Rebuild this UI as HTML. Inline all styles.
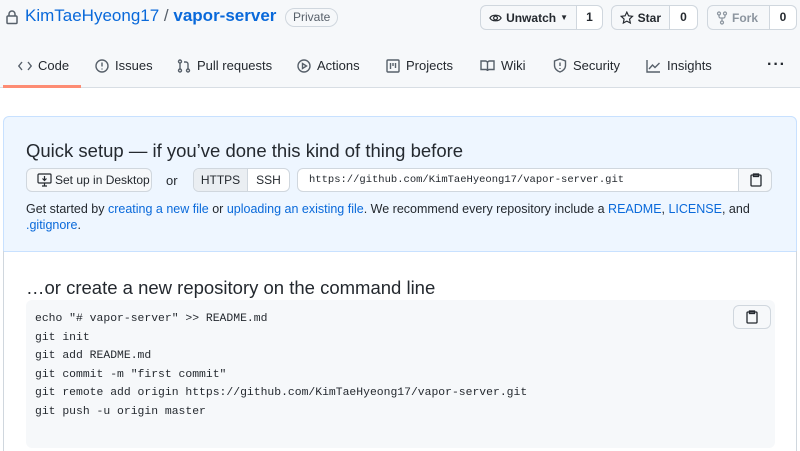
<!DOCTYPE html>
<html><head><meta charset="utf-8"><style>
*{box-sizing:border-box;margin:0;padding:0}
body{width:800px;height:450px;overflow:hidden;background:#fff;font-family:"Liberation Sans",sans-serif;color:#24292f;position:relative}
.a{position:absolute;white-space:nowrap}
.hdr{position:absolute;left:0;top:0;width:800px;height:88px;background:#f6f8fa;border-bottom:1px solid #d8dee4}
.btn{position:absolute;top:5px;height:25px;border:1px solid #d0d7de;border-radius:6px;background:#f6f8fa;font-size:12px;font-weight:bold;display:flex;align-items:center}
.btn .l{padding:0 8px;height:100%;display:flex;align-items:center;gap:4px;border-right:1px solid #d0d7de}
.btn .r{flex:1;text-align:center;background:#fff;height:100%;line-height:23px;border-radius:0 6px 6px 0}
.tab{position:absolute;top:58px;font-size:13px;color:#24292f;display:flex;align-items:center;gap:6px}
.tab svg{stroke:#57606a;fill:none;stroke-width:1.4}
.mono{font-family:"Liberation Mono",monospace}
a{color:#0969da;text-decoration:none}
</style></head><body>
<div class="hdr"></div>
<svg class="a" style="left:5px;top:9px" width="14" height="16" viewBox="0 0 14 16" fill="none" stroke="#57606a" stroke-width="1.5"><rect x="2" y="7" width="10" height="7.5" rx="1"/><path d="M4 7V5a3 3 0 0 1 6 0v2"/></svg>
<div class="a" style="left:25px;top:6px;font-size:17px;color:#0969da">KimTaeHyeong17 <span style="color:#57606a">/</span> <b>vapor-server</b></div>
<div class="a" style="left:285px;top:8px;height:19px;padding:0 7px;border:1px solid #d0d7de;border-radius:10px;font-size:12px;line-height:17px;color:#57606a">Private</div>
<div class="btn" style="left:480px;width:123px"><div class="l" style="width:96px"><svg width="14" height="12" viewBox="0 0 14 12" fill="none" stroke="#24292f" stroke-width="1.3"><path d="M1 6c2-4 10-4 12 0c-2 4-10 4-12 0z"/><circle cx="7" cy="6" r="2"/></svg>Unwatch <span style="font-size:8px">▼</span></div><div class="r">1</div></div>
<div class="btn" style="left:611px;width:87px"><div class="l" style="width:58px"><svg width="14" height="14" viewBox="0 0 14 14" fill="none" stroke="#24292f" stroke-width="1.2"><path d="M7 1l1.8 3.8 4 .5-3 2.8.8 4L7 10.2 3.4 12.1l.8-4-3-2.8 4-.5z"/></svg>Star</div><div class="r">0</div></div>
<div class="btn" style="left:707px;width:90px;color:#8c959f"><div class="l" style="width:62px"><svg width="12" height="14" viewBox="0 0 12 14" fill="none" stroke="#8c959f" stroke-width="1.2"><circle cx="3" cy="2.5" r="1.5"/><circle cx="9" cy="2.5" r="1.5"/><circle cx="6" cy="11.5" r="1.5"/><path d="M3 4v1.5a1.5 1.5 0 0 0 1.5 1.5h3A1.5 1.5 0 0 0 9 5.5V4M6 7v3"/></svg>Fork</div><div class="r" style="color:#24292f">0</div></div>

<div class="tab" style="left:18px"><svg width="14" height="12" viewBox="0 0 14 12" stroke="#24292f" stroke-width="1.6"><path d="M4 2L0.8 6 4 10M10 2l3.2 4L10 10"/></svg>Code</div>
<div class="a" style="left:3px;top:85px;width:78px;height:3px;background:#fd8c73"></div>
<div class="tab" style="left:95px"><svg width="14" height="14"><circle cx="7" cy="7" r="6"/><path d="M7 3.5v4M7 9.5v1"/></svg>Issues</div>
<div class="tab" style="left:177px"><svg width="14" height="14"><circle cx="3" cy="2.5" r="1.5"/><circle cx="3" cy="11.5" r="1.5"/><circle cx="11" cy="11.5" r="1.5"/><path d="M3 4v6M11 10V5a2 2 0 0 0-2-2H7"/></svg>Pull requests</div>
<div class="tab" style="left:297px"><svg width="14" height="14"><circle cx="7" cy="7" r="6"/><path d="M5.5 4.5v5l4-2.5z"/></svg>Actions</div>
<div class="tab" style="left:386px"><svg width="14" height="14"><rect x="1" y="1" width="12" height="12" rx="1"/><path d="M4.5 4v6M7 4v3M9.5 4v5"/></svg>Projects</div>
<div class="tab" style="left:480px"><svg width="15" height="13"><path d="M1 2h4.5a2 2 0 0 1 2 2v8a1.5 1.5 0 0 0-1.5-1.5H1zM14 2H9.5a2 2 0 0 0-2 2v8A1.5 1.5 0 0 1 9 10.5h5z"/></svg>Wiki</div>
<div class="tab" style="left:553px"><svg width="14" height="15"><path d="M7 1l5.5 2v4.5c0 3-2.5 5.5-5.5 6.5C4 13 1.5 10.5 1.5 7.5V3z"/><path d="M7 4.5v3.5M7 10v1"/></svg>Security</div>
<div class="tab" style="left:646px"><svg width="15" height="14"><path d="M1 1v12h13M3 10l3.5-4 2.5 2.5L13.5 4"/></svg>Insights</div>
<div class="a" style="left:767px;top:56px;font-size:16px;font-weight:bold;letter-spacing:1px">···</div>

<div class="a" style="left:3px;top:116px;width:794px;height:136px;background:#eef6ff;border:1px solid #c8e1ff;border-radius:6px 6px 0 0"></div>
<div class="a" style="left:3px;top:251px;width:794px;height:200px;border-left:1px solid #d0d7de;border-right:1px solid #d0d7de"></div>
<div class="a" style="left:26px;top:140px;font-size:18.5px">Quick setup — if you’ve done this kind of thing before</div>
<div class="a" style="left:26px;top:168px;width:126px;height:24px;border:1px solid #d0d7de;border-radius:6px;background:#f6f8fa;font-size:12px;display:flex;align-items:center;padding-left:10px;gap:3px"><svg width="15" height="14" viewBox="0 0 15 14" fill="none" stroke="#24292f" stroke-width="1.2"><rect x="1" y="1" width="13" height="9" rx="1"/><path d="M5 13h5M7.5 10v3M7.5 3v4.5M5.5 5.5l2 2 2-2"/></svg>Set up in Desktop</div>
<div class="a" style="left:166px;top:173px;font-size:13px">or</div>
<div class="a" style="left:193px;top:168px;width:97px;height:24px;border:1px solid #d0d7de;border-radius:6px;font-size:12px;display:flex;overflow:hidden;background:#fff"><div style="width:54px;background:#eaeef2;border-right:1px solid #d0d7de;text-align:center;line-height:22px">HTTPS</div><div style="flex:1;text-align:center;line-height:22px">SSH</div></div>
<div class="a" style="left:297px;top:168px;width:475px;height:24px;border:1px solid #d0d7de;border-radius:6px;background:#fff"></div>
<div class="a mono" style="left:309px;top:174px;font-size:10.5px">https://github.com/KimTaeHyeong17/vapor-server.git</div>
<div class="a" style="left:738px;top:168px;width:34px;height:24px;border:1px solid #d0d7de;border-radius:0 6px 6px 0;background:#f6f8fa"></div>
<svg class="a" style="left:750px;top:173px" width="12" height="14" viewBox="0 0 12 14" fill="none" stroke="#24292f" stroke-width="1.3"><rect x="1" y="2" width="10" height="11" rx="1"/><rect x="3.5" y="1" width="5" height="2.5"/></svg>
<div class="a" style="left:26px;top:201px;font-size:12.5px;line-height:16px">Get started by <a>creating a new file</a> or <a>uploading an existing file</a>. We recommend every repository include a <a>README</a>, <a>LICENSE</a>, and<br><a>.gitignore</a>.</div>

<div class="a" style="left:26px;top:277px;font-size:18.5px">…or create a new repository on the command line</div>
<div class="a" style="left:26px;top:300px;width:749px;height:148px;background:#f6f8fa;border-radius:6px"></div>
<div class="a" style="left:733px;top:305px;width:38px;height:24px;border:1px solid #d0d7de;border-radius:6px;background:#f6f8fa"></div>
<svg class="a" style="left:746px;top:310px" width="12" height="14" viewBox="0 0 12 14" fill="none" stroke="#24292f" stroke-width="1.3"><rect x="1" y="2" width="10" height="11" rx="1"/><rect x="3.5" y="1" width="5" height="2.5"/></svg>
<pre class="a mono" style="left:35px;top:310px;font-size:11.4px;line-height:18.6px;color:#24292f;white-space:pre">echo "# vapor-server" >> README.md
git init
git add README.md
git commit -m "first commit"
git remote add origin https://github.com/KimTaeHyeong17/vapor-server.git
git push -u origin master</pre>
</body></html>
